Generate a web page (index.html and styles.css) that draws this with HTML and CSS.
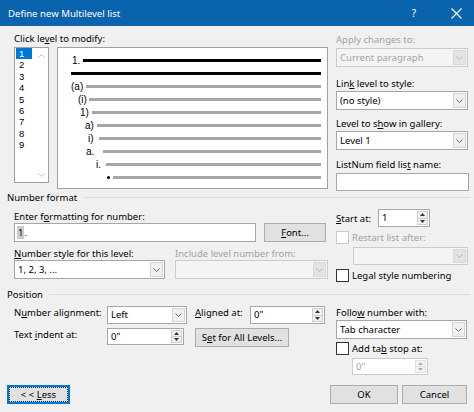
FILE: index.html
```html
<!DOCTYPE html>
<html>
<head>
<meta charset="utf-8">
<title>Define new Multilevel list</title>
<link rel="stylesheet" href="styles.css">
</head>
<body>
<div class="dlg">
  <div class="titlebar">
    <span class="title">Define new Multilevel list</span>
    <span class="tb-help">?</span>
    <span class="tb-close"><svg width="11" height="11" viewBox="0 0 11 11"><path d="M0.5 0.5 L10.5 10.5 M10.5 0.5 L0.5 10.5" stroke="#fff" stroke-width="1.1" fill="none"/></svg></span>
  </div>

  <div class="content">
    <!-- top section -->
    <div class="sec top">
      <div class="col-l">
        <div class="lbl m-click">Click le<u>v</u>el to modify:</div>
        <div class="levels">
          <div class="listbox">
            <ul class="items">
              <li class="sel-item">1</li>
              <li>2</li><li>3</li><li>4</li><li>5</li><li>6</li><li>7</li><li>8</li><li>9</li>
            </ul>
            <div class="lb-scroll">
              <svg width="7" height="4" viewBox="0 0 7 4"><polyline points="0.5,3.5 3.5,0.5 6.5,3.5" fill="none" stroke="#c2c2c2" stroke-width="1"/></svg>
              <svg width="7" height="4" viewBox="0 0 7 4"><polyline points="0.5,0.5 3.5,3.5 6.5,0.5" fill="none" stroke="#c2c2c2" stroke-width="1"/></svg>
            </div>
          </div>
          <div class="preview">
            <div class="pr p1"><span class="pl">1.</span><span class="ln black"></span></div>
            <div class="pr p2"><span class="pl"></span><span class="ln black"></span></div>
            <div class="pr p3"><span class="pl">(a)</span><span class="ln"></span></div>
            <div class="pr p4"><span class="pl">(i)</span><span class="ln"></span></div>
            <div class="pr p5"><span class="pl">1)</span><span class="ln"></span></div>
            <div class="pr p6"><span class="pl">a)</span><span class="ln"></span></div>
            <div class="pr p7"><span class="pl">i)</span><span class="ln"></span></div>
            <div class="pr p8"><span class="pl">a.</span><span class="ln"></span></div>
            <div class="pr p9"><span class="pl">i.</span><span class="ln"></span></div>
            <div class="pr p10"><span class="pl"><span class="dot"></span></span><span class="ln"></span></div>
          </div>
        </div>
      </div>
      <div class="col-r">
        <div class="lbl dis-t m-apply">Apply changes to:</div>
        <div class="sel dis m-apply-sel"><span class="v">Current paragraph</span><span class="b"><svg width="7" height="4" viewBox="0 0 7 4"><polyline points="0.5,0.5 3.5,3.5 6.5,0.5" fill="none" stroke="#b8b8b8" stroke-width="1"/></svg></span></div>
        <div class="lbl m-link">Lin<u>k</u> level to style:</div>
        <div class="sel m-sel1"><span class="v">(no style)</span><span class="b"><svg width="7" height="4" viewBox="0 0 7 4"><polyline points="0.5,0.5 3.5,3.5 6.5,0.5" fill="none" stroke="#6a6a6a" stroke-width="1"/></svg></span></div>
        <div class="lbl m-gal">Level to s<u>h</u>ow in gallery:</div>
        <div class="sel m-sel1"><span class="v">Level 1</span><span class="b"><svg width="7" height="4" viewBox="0 0 7 4"><polyline points="0.5,0.5 3.5,3.5 6.5,0.5" fill="none" stroke="#6a6a6a" stroke-width="1"/></svg></span></div>
        <div class="lbl m-listnum">ListNum field lis<u>t</u> name:</div>
        <div class="input listnum"></div>
      </div>
    </div>

    <!-- number format -->
    <div class="ghead">Number format</div>
    <div class="sec nf">
      <div class="col-l">
        <div class="lbl m-enter">Enter f<u>o</u>rmatting for number:</div>
        <div class="row">
          <div class="input fmt"><span class="hl">1</span>.</div>
          <div class="btn font"><span><u>F</u>ont...</span></div>
        </div>
        <div class="row">
          <div class="subcol style">
            <div class="lbl m-style"><u>N</u>umber style for this level:</div>
            <div class="sel"><span class="v">1, 2, 3, ...</span><span class="b"><svg width="7" height="4" viewBox="0 0 7 4"><polyline points="0.5,0.5 3.5,3.5 6.5,0.5" fill="none" stroke="#6a6a6a" stroke-width="1"/></svg></span></div>
          </div>
          <div class="subcol include">
            <div class="lbl dis-t m-style">Include level number from:</div>
            <div class="sel dis"><span class="v"></span><span class="b"><svg width="7" height="4" viewBox="0 0 7 4"><polyline points="0.5,0.5 3.5,3.5 6.5,0.5" fill="none" stroke="#b8b8b8" stroke-width="1"/></svg></span></div>
          </div>
        </div>
      </div>
      <div class="col-r">
        <div class="row start">
          <span class="lbl start-lbl"><u>S</u>tart at:</span>
          <div class="spin start-spin"><span class="v">1</span><span class="sb"><span class="su"><svg width="5" height="3" viewBox="0 0 5 3"><polygon points="2.5,0 5,3 0,3" fill="#333"/></svg></span><span class="sd"><svg width="5" height="3" viewBox="0 0 5 3"><polygon points="0,0 5,0 2.5,3" fill="#333"/></svg></span></span></div>
        </div>
        <div class="chkrow m-restart"><span class="chk dis"></span><span class="dis-t">Restart list after:</span></div>
        <div class="sel dis restart-sel"><span class="v"></span><span class="b"><svg width="7" height="4" viewBox="0 0 7 4"><polyline points="0.5,0.5 3.5,3.5 6.5,0.5" fill="none" stroke="#b8b8b8" stroke-width="1"/></svg></span></div>
        <div class="chkrow m-legal"><span class="chk"></span><span>Legal style numbering</span></div>
      </div>
    </div>

    <!-- position -->
    <div class="ghead">Position</div>
    <div class="sec pos">
      <div class="col-l">
        <div class="row pr1">
          <span class="lbl plbl">N<u>u</u>mber alignment:</span>
          <div class="sel align"><span class="v">Left</span><span class="b"><svg width="7" height="4" viewBox="0 0 7 4"><polyline points="0.5,0.5 3.5,3.5 6.5,0.5" fill="none" stroke="#6a6a6a" stroke-width="1"/></svg></span></div>
          <span class="lbl albl"><u>A</u>ligned at:</span>
          <div class="spin aligned"><span class="v">0"</span><span class="sb"><span class="su"><svg width="5" height="3" viewBox="0 0 5 3"><polygon points="2.5,0 5,3 0,3" fill="#333"/></svg></span><span class="sd"><svg width="5" height="3" viewBox="0 0 5 3"><polygon points="0,0 5,0 2.5,3" fill="#333"/></svg></span></span></div>
        </div>
        <div class="row pr2">
          <span class="lbl plbl">Text <u>i</u>ndent at:</span>
          <div class="spin indent"><span class="v">0"</span><span class="sb"><span class="su"><svg width="5" height="3" viewBox="0 0 5 3"><polygon points="2.5,0 5,3 0,3" fill="#333"/></svg></span><span class="sd"><svg width="5" height="3" viewBox="0 0 5 3"><polygon points="0,0 5,0 2.5,3" fill="#333"/></svg></span></span></div>
          <div class="btn setall"><span>S<u>e</u>t for All Levels...</span></div>
        </div>
      </div>
      <div class="col-r">
        <div class="lbl m-follow">Follo<u>w</u> number with:</div>
        <div class="sel follow"><span class="v">Tab character</span><span class="b"><svg width="7" height="4" viewBox="0 0 7 4"><polyline points="0.5,0.5 3.5,3.5 6.5,0.5" fill="none" stroke="#6a6a6a" stroke-width="1"/></svg></span></div>
        <div class="chkrow m-tab"><span class="chk"></span><span>Add ta<u>b</u> stop at:</span></div>
        <div class="spin dis tabstop"><span class="v">0"</span><span class="sb"><span class="su"><svg width="5" height="3" viewBox="0 0 5 3"><polygon points="2.5,0 5,3 0,3" fill="#b0b0b0"/></svg></span><span class="sd"><svg width="5" height="3" viewBox="0 0 5 3"><polygon points="0,0 5,0 2.5,3" fill="#b0b0b0"/></svg></span></span></div>
      </div>
    </div>

    <!-- buttons -->
    <div class="footer">
      <div class="btn less"><span class="focus">&lt;&nbsp;&lt;&nbsp;<u>L</u>ess</span></div>
      <div class="right-btns">
        <div class="btn ok"><span>OK</span></div>
        <div class="btn cancel"><span>Cancel</span></div>
      </div>
    </div>
  </div>
</div>
</body>
</html>
```

FILE: styles.css
```css
* { box-sizing: border-box; }
html, body { margin: 0; padding: 0; }
body {
  width: 474px;
  height: 412px;
  overflow: hidden;
  background: #f0f0f0;
  font-family: "Noto Sans", "DejaVu Sans", sans-serif;
  font-size: 9.5px;
  color: #000;
}
u { text-decoration: underline; text-underline-offset: 1px; }
ul { list-style: none; margin: 0; padding: 0; }

.dlg { width: 474px; height: 412px; }

/* title bar */
.titlebar {
  height: 26px;
  background: #0a63ad;
  color: #fff;
  display: flex;
  align-items: center;
  padding-left: 8px;
  padding-right: 3px;
}
.title { flex: 1; font-size: 9.6px; }
.tb-help { width: 18px; text-align: center; font-size: 10px; margin-right: 18px; }
.tb-close { width: 30px; height: 26px; display: flex; align-items: center; justify-content: center; }

/* layout */
.content { padding-left: 7px; }
.sec { display: flex; padding-left: 7px; }
.col-l { width: 314px; }
.col-r { width: 133px; margin-left: 8px; }
.row { display: flex; align-items: center; }

.lbl { height: 13px; line-height: 13px; white-space: nowrap; }
.dis-t { color: #a3a3a3; }

/* top */
.m-click { margin-top: 6px; }
.levels { display: flex; margin-top: 2px; }
.listbox {
  width: 35px;
  height: 136px;
  border: 1px solid #a0a0a0;
  background: #fff;
  display: flex;
}
.items { flex: 1; }
.items li {
  height: 11.375px;
  line-height: 11.375px;
  padding-left: 3px;
  margin-left: 1px;
  width: 16px;
  font-family: "Liberation Sans", Arial, sans-serif;
  font-size: 9.5px;
}
.items li.sel-item { background: #0078d7; color: #fff; }
.lb-scroll {
  width: 14px;
  display: flex;
  flex-direction: column;
  justify-content: space-between;
  align-items: center;
  padding: 6px 0 5px;
}
.preview {
  width: 271px;
  height: 142px;
  margin-left: 8px;
  border: 1px solid #a0a0a0;
  background: #fff;
  padding: 6px 6px 0 0;
  font-family: "Liberation Sans", Arial, sans-serif;
  font-size: 10px;
}
.pr { display: flex; align-items: center; height: 13px; }
.pl { display: flex; align-items: center; height: 13px; white-space: nowrap; flex: none; }
.ln { flex: 1; height: 3px; background: #a6a6a6; }
.ln.black { background: #000; }
.dot { width: 3px; height: 3px; border-radius: 50%; background: #000; }
.p1 { padding-left: 14px; } .p1 .pl { width: 11px; }
.p2 { padding-left: 13px; } .p2 .pl { width: 0; }
.p3 { padding-left: 13px; } .p3 .pl { width: 15px; }
.p4 { padding-left: 20px; } .p4 .pl { width: 11px; }
.p5 { padding-left: 22px; } .p5 .pl { width: 12px; }
.p6 { padding-left: 27px; } .p6 .pl { width: 12px; }
.p7 { padding-left: 30px; } .p7 .pl { width: 11px; }
.p8 { padding-left: 28px; } .p8 .pl { width: 17px; }
.p9 { padding-left: 38px; } .p9 .pl { width: 10px; }
.p10 { padding-left: 49px; } .p10 .pl { width: 6px; }

/* combo / select */
.sel {
  height: 19px;
  display: flex;
  border: 1px solid #a6a6a6;
  background: #fff;
}
.sel .v { flex: 1; padding-left: 3px; line-height: 17px; white-space: nowrap; overflow: hidden; }
.sel .b {
  width: 13px;
  margin: 1px;
  border: 1px solid #d4d4d4;
  background: #f0f0f0;
  display: flex;
  align-items: center;
  justify-content: center;
}
.sel.dis { border-color: #cccccc; background: #f4f4f4; color: #a3a3a3; }
.sel.dis .b { border-color: #d9d9d9; background: #e3e3e3; }

.input { height: 18px; border: 1px solid #a6a6a6; background: #fff; }

.m-apply { margin-top: 7px; }
.m-apply-sel { margin-top: 2px; width: 132px; }
.m-link { margin-top: 10px; }
.m-gal { margin-top: 7px; }
.m-sel1 { margin-top: 1px; width: 132px; }
.m-listnum { margin-top: 8px; }
.listnum { margin-top: 2px; width: 133px; }

/* group headers */
.ghead {
  display: flex;
  align-items: center;
  height: 13px;
  line-height: 13px;
  margin-right: 4px;
}
.ghead::after {
  content: "";
  flex: 1;
  height: 1px;
  background: #dcdcdc;
  margin-left: 6px;
}

/* number format */
.nf { height: 84px; }
.m-enter { margin-top: 6px; }
.fmt { width: 242px; height: 19px; padding-left: 2px; line-height: 17px; }
.hl { background: #cccccc; padding: 0 1px; }
.btn {
  height: 19px;
  border: 1px solid #adadad;
  background: #e1e1e1;
  display: flex;
  align-items: center;
  justify-content: center;
  white-space: nowrap;
}
.font { width: 62px; margin-left: 8px; }
.subcol.style { width: 151px; }
.subcol.include { width: 153px; margin-left: 10px; }
.m-style { margin-top: 5px; margin-bottom: 0; }

.start { margin-top: 5px; }
.start-lbl { width: 42px; }
.spin {
  height: 18px;
  display: flex;
  border: 1px solid #a6a6a6;
  background: #fff;
}
.spin .v { flex: 1; padding-left: 3px; line-height: 16px; }
.spin .sb {
  width: 11px;
  margin: 1px;
  border: 1px solid #cfcfcf;
  background: #f0f0f0;
  display: flex;
  flex-direction: column;
}
.spin .su, .spin .sd { flex: 1; display: flex; align-items: center; justify-content: center; }
.spin .su { border-bottom: 1px solid #cfcfcf; }
.spin.dis { border-color: #cccccc; background: #fff; color: #a3a3a3; }
.spin.dis .sb { border-color: #e0e0e0; background: #f4f4f4; }
.spin.dis .su { border-bottom-color: #e0e0e0; }
.start-spin { width: 52px; }

.chkrow { display: flex; align-items: center; height: 13px; white-space: nowrap; }
.chk {
  width: 13px;
  height: 13px;
  border: 1px solid #333;
  background: #fff;
  margin-right: 3px;
  flex: none;
}
.chk.dis { border-color: #cccccc; }
.m-restart { margin-top: 4px; }
.restart-sel { margin-top: 3px; margin-left: 17px; width: 115px; height: 18px; }
.restart-sel .v { line-height: 16px; }
.m-legal { margin-top: 4px; }

/* position */
.pos { height: 84px; }
.pr1 { margin-top: 5px; align-items: flex-start; }
.pr2 { margin-top: 4px; align-items: flex-start; }
.plbl { width: 93px; }
.align { width: 80px; height: 18px; }
.align .v { line-height: 16px; }
.albl { width: 55px; margin-left: 8px; }
.aligned { width: 75px; }
.indent { width: 77px; height: 17px; }
.indent .v { line-height: 15px; }
.setall { width: 94px; margin-left: 11px; }

.m-follow { margin-top: 5px; }
.follow { margin-top: 1px; width: 131px; }
.m-tab { margin-top: 3px; }
.tabstop { margin-top: 3px; margin-left: 16px; width: 76px; height: 17px; }
.tabstop .v { line-height: 15px; }

/* footer */
.footer { display: flex; justify-content: space-between; margin-top: 0; padding-right: 7px; }
.right-btns { display: flex; }
.less {
  width: 63px;
  border: 1px solid #0078d7;
  box-shadow: inset 0 0 0 1px #0078d7;
}
.less .focus {
  display: block;
  text-align: center;
  line-height: 13px;
  width: 57px;
  height: 13px;
  outline: 1px dotted #222;
}
.ok { width: 68px; }
.cancel { width: 65px; margin-left: 4px; }
```
